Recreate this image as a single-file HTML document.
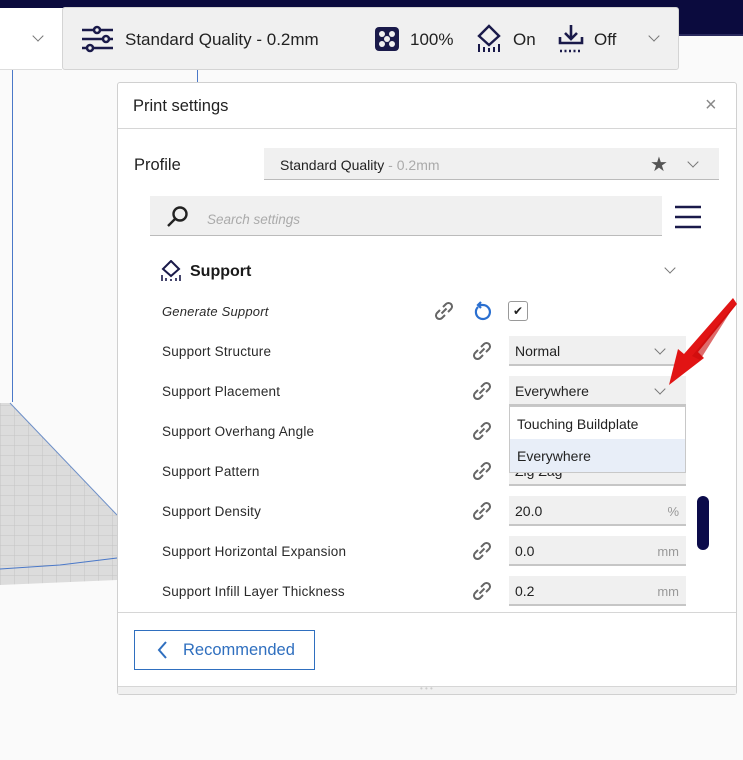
<!DOCTYPE html>
<html><head><meta charset="utf-8"><style>
*{margin:0;padding:0;box-sizing:border-box}
body{width:743px;height:760px;background:#fafafa;position:relative;overflow:hidden;font-family:"Liberation Sans",sans-serif;color:#222}
.a{position:absolute}
.lbl{position:absolute;left:162px;font-size:13.5px;color:#2a2a2a;letter-spacing:0.2px}
.fld{position:absolute;left:509px;width:177px;height:30px;background:#f0f0f0;border-bottom:2px solid #c6c6c6;font-size:14px;padding-left:6px;line-height:31px;color:#222}
.unit{position:absolute;right:7px;top:0;color:#999;font-size:13px}
.chev{position:absolute;width:8px;height:8px;border-right:1.4px solid #777;border-bottom:1.4px solid #777;transform:rotate(45deg)}
.link{position:absolute;left:470px}
</style></head><body>
<div class="a" style="left:0;top:0;width:743px;height:8px;background:#0b0b3e"></div>
<div class="a" style="left:678px;top:0;width:65px;height:36px;background:#0b0b3e"></div>
<div class="a" style="left:678px;top:34px;width:65px;height:2px;background:#2a2a5e"></div>
<div class="a" style="left:0;top:8px;width:62px;height:62px;background:#fff;border-bottom:1px solid #ddd"></div>
<div class="chev" style="left:34px;top:32px"></div>
<div class="a" style="left:12px;top:70px;width:1px;height:332px;background:#4a78c8"></div>
<div class="a" style="left:197px;top:70px;width:1px;height:12px;background:#4a78c8"></div>
<svg class="a" style="left:0;top:395px" width="120" height="200">
<defs><pattern id="g" width="14" height="10" patternUnits="userSpaceOnUse"><rect width="14" height="10" fill="#dcdcdc"/><path d="M0 0H14M0 0V10" stroke="#c4c4c4" stroke-width="1"/></pattern></defs>
<polygon points="0,8 10,8 117,120 117,185 0,190" fill="url(#g)"/>
<polyline points="10,8 117,120" stroke="#6d8fc8" fill="none"/>
<polyline points="0,174 60,170 117,163" stroke="#4a78c8" fill="none"/>
</svg>
<div class="a" style="left:62px;top:7px;width:617px;height:63px;background:#f0f0f0;border:1px solid #d4d4d4;border-radius:3px"></div>
<svg class="a" style="left:81px;top:25px" width="34" height="28" fill="none" stroke="#1a1a4a" stroke-width="2.6">
<path d="M1 5H32M1 14H32M1 23H32"/><circle cx="16" cy="5" r="3" fill="#f0f0f0"/><circle cx="25" cy="14" r="3" fill="#f0f0f0"/><circle cx="9" cy="23" r="3" fill="#f0f0f0"/></svg>
<div class="a" style="left:125px;top:30px;font-size:17px;color:#222">Standard Quality - 0.2mm</div>
<svg class="a" style="left:374px;top:26px" width="26" height="26"><rect x="1" y="1" width="24" height="24" rx="4" fill="#1a1a4a"/><g fill="#f0f0f0"><circle cx="8" cy="8" r="3"/><circle cx="18" cy="8" r="3"/><circle cx="13" cy="13" r="3"/><circle cx="8" cy="18" r="3"/><circle cx="18" cy="18" r="3"/></g></svg>
<div class="a" style="left:410px;top:30px;font-size:17px">100%</div>
<svg class="a" style="left:476px;top:24px" width="26" height="30" fill="none" stroke="#1a1a4a" stroke-width="2.4"><path d="M13 2L23 12L13 21L3 12Z"/><path d="M3 28V20M8 28V23M13 28V24M18 28V23M23 28V20" stroke-width="2"/></svg>
<div class="a" style="left:513px;top:30px;font-size:17px">On</div>
<svg class="a" style="left:557px;top:24px" width="28" height="30" fill="none" stroke="#1a1a4a" stroke-width="2.6"><path d="M14 1V14M8 9L14 15L20 9"/><path d="M3 13V19H25V13"/><path d="M3 27H25" stroke-dasharray="2 2.5"/></svg>
<div class="a" style="left:594px;top:30px;font-size:17px">Off</div>
<div class="chev" style="left:650px;top:32px"></div>
<div class="a" style="left:117px;top:82px;width:620px;height:613px;background:#fff;border:1px solid #d0d0d0;border-radius:3px"></div>
<div class="a" style="left:133px;top:97px;font-size:16.5px">Print settings</div>
<div class="a" style="left:705px;top:94px;font-size:20px;color:#888">×</div>
<div class="a" style="left:118px;top:128px;width:618px;height:1px;background:#d6d6d6"></div>
<div class="a" style="left:134px;top:156px;font-size:16.5px">Profile</div>
<div class="a" style="left:264px;top:148px;width:455px;height:32px;background:#f0f0f0;border-bottom:1px solid #bbb"></div>
<div class="a" style="left:280px;top:157px;font-size:14px">Standard Quality<span style="color:#aaa"> - 0.2mm</span></div>
<div class="a" style="left:650px;top:152px;font-size:20px;color:#555">★</div>
<div class="chev" style="left:689px;top:158px"></div>
<div class="a" style="left:150px;top:196px;width:512px;height:40px;background:#f0f0f0;border-bottom:1px solid #bbb"></div>
<svg class="a" style="left:166px;top:205px" width="24" height="24" fill="none" stroke="#222" stroke-width="2.4"><circle cx="14" cy="9" r="6.5"/><path d="M9.5 13.5L2 21"/></svg>
<div class="a" style="left:207px;top:212px;font-size:13.5px;color:#aaa;font-style:italic">Search settings</div>
<svg class="a" style="left:674px;top:205px" width="28" height="24" stroke="#1a1a4a" stroke-width="2.6"><path d="M1 2H27M1 12H27M1 22H27"/></svg>
<svg class="a" style="left:160px;top:260px" width="22" height="22" fill="none" stroke="#1a1a4a" stroke-width="2"><path d="M11 1L19 9L11 16L3 9Z"/><path d="M2 21V15M6 21V18M11 21V19M16 21V18M20 21V15" stroke-width="1.6"/></svg>
<div class="a" style="left:190px;top:263px;font-size:16px;font-weight:bold;color:#1a1a1a">Support</div>
<div class="chev" style="left:666px;top:264px"></div>
<div class="lbl" style="top:304px;font-style:italic;font-size:13px">Generate Support</div>
<svg width="0" height="0" style="position:absolute"><defs><g id="lk" fill="none" stroke="#666" stroke-width="2"><path d="M9.5 14.5L14.5 9.5M8 11L5 14a3.5 3.5 0 0 0 5 5L13 16M16 13L19 10a3.5 3.5 0 0 0-5-5L11 8"/></g></defs></svg>
<svg class="a" style="left:432px;top:299px" width="24" height="24"><use href="#lk"/></svg>
<svg class="a" style="left:471px;top:300px" width="22" height="22" fill="none" stroke="#2a6fd0" stroke-width="2.2"><path d="M7 7A7 7 0 1 0 12 5H8"/><path d="M10 2L7 5L10 8"/></svg>
<div class="a" style="left:508px;top:301px;width:20px;height:20px;border:1px solid #999;border-radius:3px;background:#fff;font-size:12px;text-align:center;line-height:18px">✔</div>
<div class="lbl" style="top:344px">Support Structure</div>
<div class="lbl" style="top:384px">Support Placement</div>
<div class="lbl" style="top:424px">Support Overhang Angle</div>
<div class="lbl" style="top:464px">Support Pattern</div>
<div class="lbl" style="top:504px">Support Density</div>
<div class="lbl" style="top:544px">Support Horizontal Expansion</div>
<div class="lbl" style="top:584px">Support Infill Layer Thickness</div>
<svg class="link" style="top:339px" width="24" height="24"><use href="#lk"/></svg>
<svg class="link" style="top:379px" width="24" height="24"><use href="#lk"/></svg>
<svg class="link" style="top:419px" width="24" height="24"><use href="#lk"/></svg>
<svg class="link" style="top:459px" width="24" height="24"><use href="#lk"/></svg>
<svg class="link" style="top:499px" width="24" height="24"><use href="#lk"/></svg>
<svg class="link" style="top:539px" width="24" height="24"><use href="#lk"/></svg>
<svg class="link" style="top:579px" width="24" height="24"><use href="#lk"/></svg>
<div class="fld" style="top:336px">Normal<div class="chev" style="right:22px;top:9px"></div></div>
<div class="fld" style="top:376px">Everywhere<div class="chev" style="right:22px;top:9px"></div></div>
<div class="fld" style="top:456px">Zig Zag</div>
<div class="fld" style="top:496px">20.0<span class="unit">%</span></div>
<div class="fld" style="top:536px">0.0<span class="unit">mm</span></div>
<div class="fld" style="top:576px">0.2<span class="unit">mm</span></div>
<div class="a" style="left:509px;top:406px;width:177px;height:67px;background:#fff;border:1px solid #c8c8c8;font-size:14px">
<div style="height:32px;line-height:35px;padding-left:7px">Touching Buildplate</div>
<div style="height:33px;line-height:35px;padding-left:7px;background:#e8eef8">Everywhere</div>
</div>
<div class="a" style="left:697px;top:496px;width:12px;height:54px;border-radius:6px;background:#0b0b4a"></div>
<div class="a" style="left:118px;top:612px;width:618px;height:1px;background:#d6d6d6"></div>
<div class="a" style="left:134px;top:630px;width:181px;height:40px;border:1px solid #2f6fbf;background:#fff"></div>
<svg class="a" style="left:155px;top:640px" width="14" height="20" fill="none" stroke="#2f6fbf" stroke-width="2"><path d="M11 2L4 10L11 18"/></svg>
<div class="a" style="left:183px;top:641px;font-size:16.5px;color:#2f6fbf">Recommended</div>
<div class="a" style="left:118px;top:686px;width:618px;height:8px;background:#f0f0f0;border-top:1px solid #d6d6d6"></div>
<div class="a" style="left:420px;top:684px;font-size:8px;color:#ccc">• • •</div>
<svg class="a" style="left:640px;top:290px" width="103" height="110"><polygon points="97,14 58,62 64,68 29,95 38,59 44,64 93,8" fill="#e11414"/><polygon points="96,13 52,66 60,70" fill="#c80a0a" opacity="0.6"/></svg>
</body></html>
